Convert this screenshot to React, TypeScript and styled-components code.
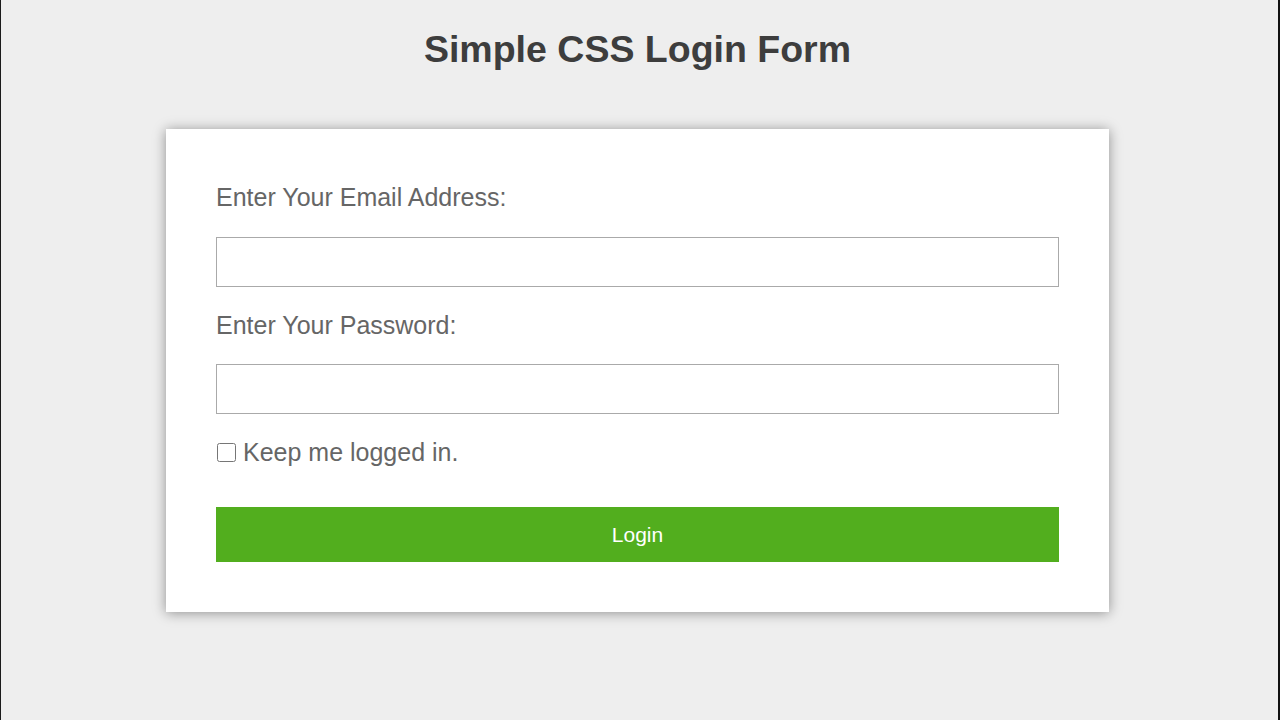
import { useState } from "react";
import styled, { createGlobalStyle } from "styled-components";

const GlobalStyle = createGlobalStyle`
  html, body {
    margin: 0;
    padding: 0;
    background: #eeeeee;
  }
  * {
    box-sizing: border-box;
  }
`;

const Page = styled.div`
  min-height: 720px;
  border-left: 1px solid #1a1a1a;
  border-right: 2px solid #111;
  padding-right: 4px;
  font-family: "Liberation Sans", Arial, sans-serif;
  display: flex;
  flex-direction: column;
  align-items: center;
`;

const Title = styled.h1`
  margin: 28px 0 0;
  font-size: 37.5px;
  line-height: 42px;
  font-weight: bold;
  color: #3d3d3d;
`;

const Card = styled.form`
  margin-top: 59px;
  width: 943px;
  background: #fff;
  padding: 54px 50px 50px;
  box-shadow: 0 1px 12px rgba(0, 0, 0, 0.4);
  display: flex;
  flex-direction: column;
`;

const Label = styled.label<{ gap: number }>`
  display: block;
  font-size: 25px;
  line-height: 28px;
  color: #666;
  margin-bottom: ${({ gap }) => gap}px;
`;

const Input = styled.input`
  display: block;
  width: 100%;
  height: 50px;
  border: 1px solid #aaa;
  padding: 0 12px;
  font-size: 20px;
  font-family: inherit;
  margin-bottom: 24px;
  outline: none;
`;

const CheckRow = styled.label`
  display: flex;
  align-items: center;
  font-size: 25px;
  line-height: 28px;
  color: #666;
  margin-bottom: 41px;
  cursor: pointer;
`;

const CheckBox = styled.input`
  width: 19px;
  height: 19px;
  margin: 0 7px 0 1px;
  accent-color: #52ae1e;
`;

const Button = styled.button`
  height: 55px;
  width: 100%;
  border: none;
  background: #52ae1e;
  color: #fff;
  font-family: inherit;
  font-size: 21px;
  cursor: pointer;
`;

function App() {
  const [email, setEmail] = useState("");
  const [password, setPassword] = useState("");
  const [keep, setKeep] = useState(false);

  return (
    <Page>
      <GlobalStyle />
      <Title>Simple CSS Login Form</Title>
      <Card onSubmit={(e) => e.preventDefault()}>
        <Label gap={26} htmlFor="email">
          Enter Your Email Address:
        </Label>
        <Input id="email" type="email" value={email} onChange={(e) => setEmail(e.target.value)} />
        <Label gap={25} htmlFor="password">
          Enter Your Password:
        </Label>
        <Input id="password" type="password" value={password} onChange={(e) => setPassword(e.target.value)} />
        <CheckRow>
          <CheckBox type="checkbox" checked={keep} onChange={(e) => setKeep(e.target.checked)} />
          Keep me logged in.
        </CheckRow>
        <Button type="submit">Login</Button>
      </Card>
    </Page>
  );
}

export default App;
